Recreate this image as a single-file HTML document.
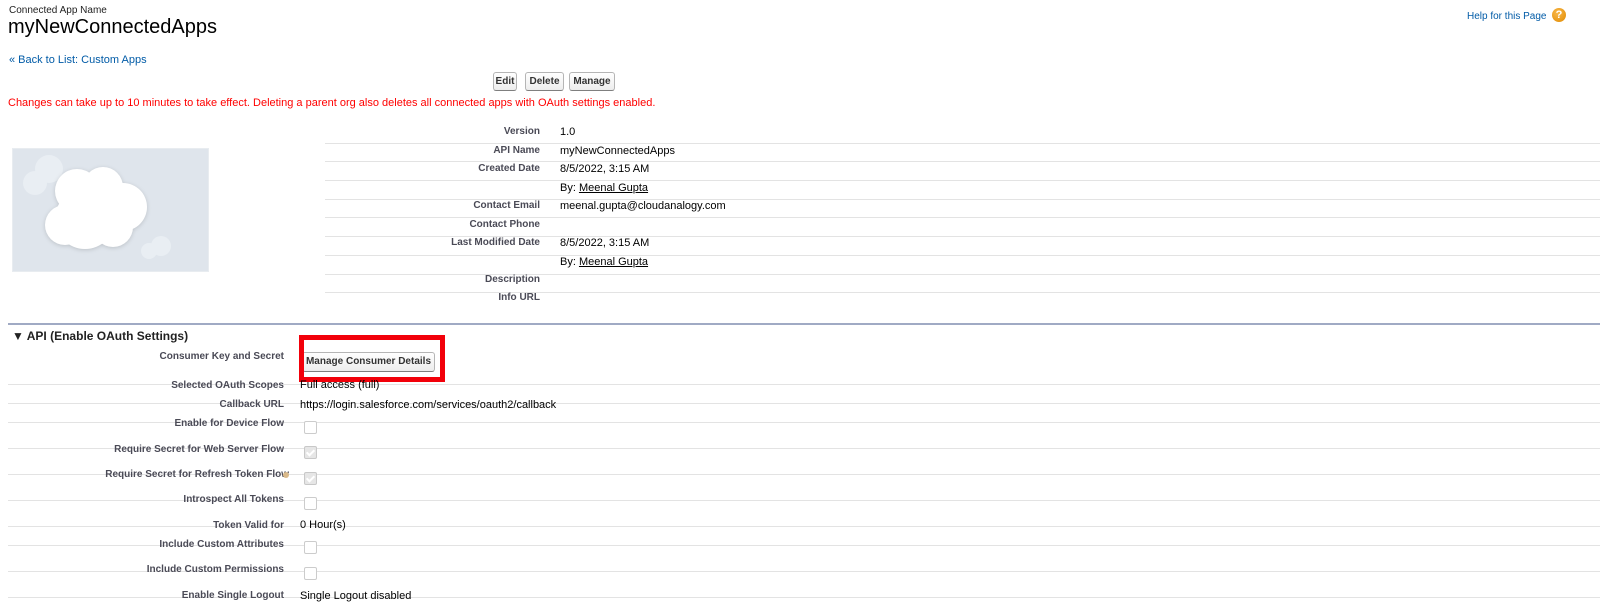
<!DOCTYPE html>
<html><head><style>
body{margin:0;width:1600px;height:616px;background:#fff;font-family:"Liberation Sans",Arial,sans-serif;position:relative;overflow:hidden;color:#000}
.a{position:absolute;white-space:nowrap}
.lbl{position:absolute;font-size:10px;font-weight:bold;color:#4a4a56;text-align:right;white-space:nowrap}
.val{position:absolute;font-size:11px;color:#000;white-space:nowrap}
.ln{position:absolute;height:1px;background:#e3e3e3;right:0}
.btn{position:absolute;height:17px;border:1px solid #b5b5b5;border-bottom-color:#7f7f7f;border-radius:3px;background:linear-gradient(#fff,#ededed);font-size:10px;font-weight:bold;color:#333;text-align:center;line-height:17px}
.cb{position:absolute;width:11px;height:11px;border:1px solid #ccc;border-radius:2px;background:#fff}
.cb.c{background:#e6e6e6;border-color:#c8c8c8}
.cb.c::after{content:"";position:absolute;left:3px;top:1px;width:3px;height:6px;border:solid #fff;border-width:0 2px 2px 0;transform:rotate(45deg)}
u{text-decoration:underline}
</style></head><body>
<div class="a" style="left:9px;top:5px;font-size:10px;color:#222">Connected App Name</div>
<div class="a" style="left:8px;top:16px;font-size:20px;color:#000">myNewConnectedApps</div>
<div class="a" style="left:1467px;top:11px;font-size:10px;color:#015ba7">Help for this Page</div>
<div class="a" style="left:1552px;top:8px;width:14px;height:14px;border-radius:50%;background:radial-gradient(circle at 40% 35%,#f9b84a,#e08a00);color:#fff;font-size:11px;font-weight:bold;text-align:center;line-height:14px">?</div>
<div class="a" style="left:9px;top:54px;font-size:11px;color:#015ba7">« Back to List: Custom Apps</div>
<div class="btn" style="left:493px;top:72px;width:22px">Edit</div>
<div class="btn" style="left:525px;top:72px;width:37px">Delete</div>
<div class="btn" style="left:569px;top:72px;width:44px">Manage</div>
<div class="a" style="left:8px;top:97px;font-size:11px;color:#f00">Changes can take up to 10 minutes to take effect. Deleting a parent org also deletes all connected apps with OAuth settings enabled.</div>

<div class="a" style="left:12px;top:148px;width:195px;height:122px;background:#dfe5ec;border:1px solid #e8ecf0;overflow:hidden">
<svg width="195" height="122" viewBox="0 0 195 122">
<g fill="#e9eef3"><circle cx="36" cy="20" r="14"/><circle cx="22" cy="34" r="12"/><circle cx="148" cy="97" r="10"/><circle cx="136" cy="102" r="8"/></g>
<g fill="#fff" style="filter:drop-shadow(0 1px 2px rgba(0,0,0,.15))"><circle cx="64" cy="42" r="22"/><circle cx="90" cy="38" r="20"/><circle cx="110" cy="58" r="24"/><circle cx="72" cy="70" r="30"/><circle cx="100" cy="78" r="20"/><circle cx="52" cy="76" r="20"/></g>
</svg></div>

<div class="lbl" style="right:1060px;top:126px">Version</div><div class="val" style="left:560px;top:126px">1.0</div>
<div class="ln" style="left:325px;top:143px"></div>
<div class="lbl" style="right:1060px;top:145px">API Name</div><div class="val" style="left:560px;top:145px">myNewConnectedApps</div>
<div class="ln" style="left:325px;top:161px"></div>
<div class="lbl" style="right:1060px;top:163px">Created Date</div><div class="val" style="left:560px;top:163px">8/5/2022, 3:15 AM</div>
<div class="ln" style="left:325px;top:180px"></div>
<div class="val" style="left:560px;top:182px">By: <u>Meenal Gupta</u></div>
<div class="ln" style="left:325px;top:199px"></div>
<div class="lbl" style="right:1060px;top:200px">Contact Email</div><div class="val" style="left:560px;top:200px">meenal.gupta@cloudanalogy.com</div>
<div class="ln" style="left:325px;top:217px"></div>
<div class="lbl" style="right:1060px;top:219px">Contact Phone</div>
<div class="ln" style="left:325px;top:236px"></div>
<div class="lbl" style="right:1060px;top:237px">Last Modified Date</div><div class="val" style="left:560px;top:237px">8/5/2022, 3:15 AM</div>
<div class="ln" style="left:325px;top:255px"></div>
<div class="val" style="left:560px;top:256px">By: <u>Meenal Gupta</u></div>
<div class="ln" style="left:325px;top:274px"></div>
<div class="lbl" style="right:1060px;top:274px">Description</div>
<div class="ln" style="left:325px;top:292px"></div>
<div class="lbl" style="right:1060px;top:292px">Info URL</div>

<div class="a" style="left:8px;right:0;top:323px;height:2px;background:#a0aac4"></div>
<div class="a" style="left:12px;top:329px;font-size:12px;font-weight:bold;color:#222">▼ API (Enable OAuth Settings)</div>

<div class="lbl" style="right:1316px;top:351px">Consumer Key and Secret</div>
<div class="btn" style="left:302px;top:352px;width:131px;height:18px">Manage Consumer Details</div>
<div class="a" style="left:299px;top:335px;width:136px;height:37px;border:5px solid #f2000a"></div>
<div class="ln" style="left:8px;top:384px"></div>
<div class="lbl" style="right:1316px;top:380px">Selected OAuth Scopes</div><div class="val" style="left:300px;top:379px">Full access (full)</div>
<div class="ln" style="left:8px;top:403px"></div>
<div class="lbl" style="right:1316px;top:399px">Callback URL</div><div class="val" style="left:300px;top:399px">https://login.salesforce.com/services/oauth2/callback</div>
<div class="ln" style="left:8px;top:422px"></div>
<div class="lbl" style="right:1316px;top:418px">Enable for Device Flow</div><div class="cb" style="left:304px;top:421px"></div>
<div class="ln" style="left:8px;top:448px"></div>
<div class="lbl" style="right:1316px;top:444px">Require Secret for Web Server Flow</div><div class="cb c" style="left:304px;top:446px"></div>
<div class="ln" style="left:8px;top:474px"></div>
<div class="lbl" style="right:1311px;top:469px">Require Secret for Refresh Token Flow</div><div class="a" style="left:283px;top:472px;width:6px;height:6px;border-radius:50%;background:#d9b98a"></div><div class="cb c" style="left:304px;top:472px"></div>
<div class="ln" style="left:8px;top:500px"></div>
<div class="lbl" style="right:1316px;top:494px">Introspect All Tokens</div><div class="cb" style="left:304px;top:497px"></div>
<div class="ln" style="left:8px;top:526px"></div>
<div class="lbl" style="right:1316px;top:520px">Token Valid for</div><div class="val" style="left:300px;top:519px">0 Hour(s)</div>
<div class="ln" style="left:8px;top:545px"></div>
<div class="lbl" style="right:1316px;top:539px">Include Custom Attributes</div><div class="cb" style="left:304px;top:541px"></div>
<div class="ln" style="left:8px;top:571px"></div>
<div class="lbl" style="right:1316px;top:564px">Include Custom Permissions</div><div class="cb" style="left:304px;top:567px"></div>
<div class="ln" style="left:8px;top:597px"></div>
<div class="lbl" style="right:1316px;top:590px">Enable Single Logout</div><div class="val" style="left:300px;top:590px">Single Logout disabled</div>
</body></html>
